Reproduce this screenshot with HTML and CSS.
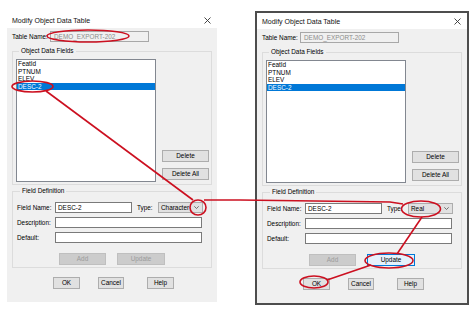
FILE: index.html
```html
<!DOCTYPE html>
<html>
<head>
<meta charset="utf-8">
<title>Modify Object Data Table</title>
<link rel="stylesheet" href="styles.css">
</head>
<body>
<div class="canvas">
  <section class="dialog dlg-a">
    <header class="titlebar">
      <span class="title">Modify Object Data Table</span>
      <svg class="close" width="7" height="7" viewBox="0 0 7 7"><path d="M0.5 0.5L6.5 6.5M6.5 0.5L0.5 6.5"/></svg>
    </header>
    <div class="body">
      <div class="tn-row">
        <span class="lbl tn-lbl">Table Name:</span>
        <div class="field ro tn-input">DEMO_EXPORT-202</div>
      </div>
      <fieldset class="group g-fields">
        <legend>Object Data Fields</legend>
        <div class="fields-inner">
          <ul class="listbox">
            <li>FeatId</li>
            <li>PTNUM</li>
            <li>ELEV</li>
            <li class="sel">DESC-2</li>
          </ul>
          <div class="side-btns">
            <button class="btn">Delete</button>
            <button class="btn">Delete All</button>
          </div>
        </div>
      </fieldset>
      <fieldset class="group g-def">
        <legend>Field Definition</legend>
        <div class="row">
          <span class="lbl">Field Name:</span>
          <div class="field name">DESC-2</div>
          <span class="type-lbl">Type:</span>
          <div class="combo"><span>Character</span><svg class="chev" width="5" height="3" viewBox="0 0 5 3"><path d="M0.3 0.3L2.5 2.5L4.7 0.3"/></svg></div>
        </div>
        <div class="row gap">
          <span class="lbl">Description:</span>
          <div class="field wide"></div>
        </div>
        <div class="row gap">
          <span class="lbl">Default:</span>
          <div class="field wide"></div>
        </div>
        <div class="btn-row">
          <button class="btn dis add">Add</button>
          <button class="btn dis upd">Update</button>
        </div>
      </fieldset>
      <div class="footer">
        <button class="btn ok">OK</button>
        <button class="btn cancel">Cancel</button>
        <button class="btn help">Help</button>
      </div>
    </div>
  </section>

  <section class="dialog dlg-b">
    <header class="titlebar">
      <span class="title">Modify Object Data Table</span>
      <svg class="close" width="7" height="7" viewBox="0 0 7 7"><path d="M0.5 0.5L6.5 6.5M6.5 0.5L0.5 6.5"/></svg>
    </header>
    <div class="body">
      <div class="tn-row">
        <span class="lbl tn-lbl">Table Name:</span>
        <div class="field ro tn-input">DEMO_EXPORT-202</div>
      </div>
      <fieldset class="group g-fields">
        <legend>Object Data Fields</legend>
        <div class="fields-inner">
          <ul class="listbox">
            <li>FeatId</li>
            <li>PTNUM</li>
            <li>ELEV</li>
            <li class="sel">DESC-2</li>
          </ul>
          <div class="side-btns">
            <button class="btn">Delete</button>
            <button class="btn">Delete All</button>
          </div>
        </div>
      </fieldset>
      <fieldset class="group g-def">
        <legend>Field Definition</legend>
        <div class="row">
          <span class="lbl">Field Name:</span>
          <div class="field name">DESC-2</div>
          <span class="type-lbl">Type:</span>
          <div class="combo"><span>Real</span><svg class="chev" width="5" height="3" viewBox="0 0 5 3"><path d="M0.3 0.3L2.5 2.5L4.7 0.3"/></svg></div>
        </div>
        <div class="row gap">
          <span class="lbl">Description:</span>
          <div class="field wide"></div>
        </div>
        <div class="row gap">
          <span class="lbl">Default:</span>
          <div class="field wide"></div>
        </div>
        <div class="btn-row">
          <button class="btn dis add">Add</button>
          <button class="btn focus upd">Update</button>
        </div>
      </fieldset>
      <div class="footer">
        <button class="btn ok">OK</button>
        <button class="btn cancel">Cancel</button>
        <button class="btn help">Help</button>
      </div>
    </div>
  </section>

  <svg class="annot" width="474" height="313" viewBox="0 0 474 313">
    <ellipse cx="88" cy="36" rx="41" ry="6"/>
    <ellipse cx="32.5" cy="86.5" rx="20.5" ry="5.5"/>
    <path d="M46 91L193 200"/>
    <ellipse cx="198" cy="207.5" rx="8" ry="7.5"/>
    <path d="M204 200L240 200L390 202L403 204"/>
    <ellipse cx="421" cy="209" rx="19.5" ry="8"/>
    <path d="M422 217L397 254"/>
    <ellipse cx="389" cy="260.5" rx="24" ry="7.5"/>
    <path d="M371 265L327 280"/>
    <ellipse cx="314" cy="282" rx="14" ry="6"/>
  </svg>
</div>
</body>
</html>
```

FILE: styles.css
```css
html, body {
  margin: 0;
  padding: 0;
  background: #ffffff;
}
body {
  font-family: "Liberation Sans", Arial, sans-serif;
  font-size: 6.4px;
  color: #000;
}
.canvas {
  position: relative;
  width: 474px;
  height: 313px;
  overflow: hidden;
  background: #fff;
}
.dialog {
  position: absolute;
  width: 210px;
  display: flex;
  flex-direction: column;
  background: #fff;
}
.dlg-a {
  left: 7px;
  top: 12px;
}
.dlg-b {
  left: 255px;
  top: 11px;
  border: 2px solid #4d4d4d;
}
.titlebar {
  height: 16px;
  display: flex;
  align-items: center;
  justify-content: space-between;
  padding: 0 6px 0 5px;
}
.title {
  font-size: 7px;
  color: #111;
}
.close path {
  stroke: #333;
  stroke-width: 0.9;
  fill: none;
}
.body {
  height: 274px;
  box-sizing: border-box;
  background: #f0f0f0;
  padding: 3px 0 0 5px;
  display: flex;
  flex-direction: column;
}
.tn-row {
  display: flex;
  align-items: center;
  height: 11px;
}
.lbl {
  width: 38px;
  flex: none;
  white-space: nowrap;
}
.field {
  box-sizing: border-box;
  height: 11px;
  border: 1px solid #7a7a7a;
  background: #fff;
  padding-left: 2px;
  line-height: 9px;
  white-space: nowrap;
  overflow: hidden;
}
.field.ro {
  background: #f0f0f0;
  border-color: #a8a8a8;
  color: #8c8c8c;
}
.tn-input {
  width: 99px;
  padding-left: 3px;
}
.group {
  box-sizing: border-box;
  width: 200px;
  min-width: 0;
  margin: 0;
  border: 1px solid #dcdcdc;
}
.group legend {
  font-size: 6.4px;
  line-height: 8px;
  padding: 0 2px;
  margin-left: 3px;
}
.g-fields {
  margin-top: 5px;
  padding: 4px 0 2px 3px;
}
.fields-inner {
  display: flex;
}
.listbox {
  box-sizing: border-box;
  width: 140px;
  height: 123px;
  margin: 0;
  padding: 0;
  list-style: none;
  background: #fff;
  border: 1px solid #828790;
}
.listbox li {
  line-height: 7.5px;
  height: 7.5px;
  padding-left: 1px;
}
.listbox li.sel {
  background: #0078d7;
  color: #fff;
}
.side-btns {
  margin-left: 6px;
  width: 47px;
  display: flex;
  flex-direction: column;
  justify-content: flex-end;
  gap: 6px;
  padding-bottom: 2px;
}
.btn {
  box-sizing: border-box;
  height: 12px;
  padding: 0;
  margin: 0;
  font-family: inherit;
  font-size: 6.4px;
  line-height: 10px;
  color: #000;
  background: #e1e1e1;
  border: 1px solid #adadad;
  border-radius: 0;
}
.side-btns .btn {
  width: 47px;
}
.btn.dis {
  background: #cccccc;
  border-color: #bfbfbf;
  color: #9b9b9b;
}
.btn.focus {
  background: #e5f1fb;
  border-color: #0078d7;
}
.g-def {
  margin-top: 2px;
  padding: 7px 0 2px 4px;
}
.row {
  display: flex;
  align-items: center;
  height: 11px;
}
.row.gap {
  margin-top: 4px;
}
.field.name {
  width: 77px;
}
.type-lbl {
  margin-left: 5px;
  width: 21px;
  flex: none;
}
.combo {
  box-sizing: border-box;
  width: 45px;
  height: 11px;
  display: flex;
  align-items: center;
  justify-content: space-between;
  padding: 0 3px 0 2px;
  background: #e1e1e1;
  border: 1px solid #adadad;
}
.chev path {
  stroke: #555;
  stroke-width: 0.8;
  fill: none;
}
.field.wide {
  width: 147px;
}
.btn-row {
  display: flex;
  margin-top: 10px;
  padding-left: 42px;
}
.btn.add {
  width: 47px;
}
.btn.upd {
  width: 48px;
  margin-left: 11px;
}
.footer {
  display: flex;
  margin-top: 9px;
}
.btn.ok {
  width: 27px;
  margin-left: 41px;
}
.btn.cancel {
  width: 26px;
  margin-left: 18px;
}
.btn.help {
  width: 27px;
  margin-left: 23px;
}
.annot {
  position: absolute;
  left: 0;
  top: 0;
  pointer-events: none;
}
.annot ellipse,
.annot path {
  fill: none;
  stroke: #cc1020;
  stroke-width: 1.6;
}
```
